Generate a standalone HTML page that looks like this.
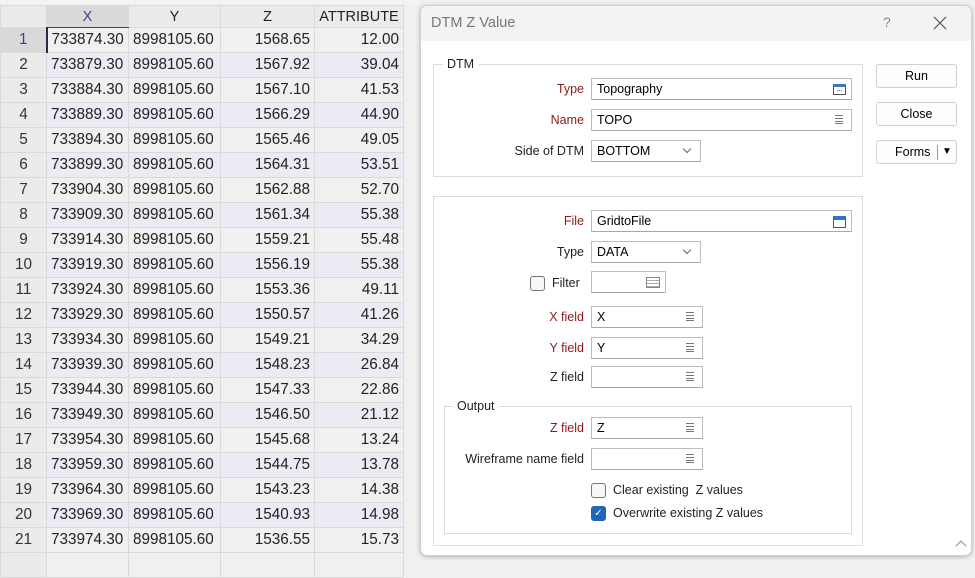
<!DOCTYPE html>
<html><head><meta charset="utf-8"><style>
*{box-sizing:border-box;margin:0;padding:0}
body{width:975px;height:559px;position:relative;background:#f0f0f0;font-family:"Liberation Sans",sans-serif;overflow:hidden}
.a{position:absolute}
table{position:absolute;left:0;top:5px;border-collapse:collapse;font-size:15.3px;color:#222}
td{height:25px;border:1px solid #dadada;padding:0 4px;white-space:nowrap}
td.h{background:#ebebeb;text-align:center;color:#333}
tr.hd td{height:22px;background:#ebebeb;text-align:center;font-size:14.5px}
tr.e td:not(.h){background:#ebebf3}
td.r{text-align:right}
.dlg{left:420px;top:5px;width:552px;height:551px;background:#fff;border:1px solid #cfcfcf;border-radius:7px;box-shadow:0 1px 4px rgba(0,0,0,.25);overflow:hidden}
.tb{left:0;top:0;width:100%;height:35px;background:#f3f3f3}
.d{font-size:12.5px;color:#222}
.lb{font-size:12.5px;text-align:right;color:#222}
.red{color:#8b1a1a}
.in{background:#fff;border:1px solid #bdbdbd;border-bottom-color:#a8a8a8;font-size:12.5px;padding:3px 5px;height:22px}
.grp{border:1px solid #dcdcdc}
.btn{background:#fdfdfd;border:1px solid #cfcfcf;border-radius:3px;font-size:12.5px;text-align:center;line-height:22px;height:24px}
.ham{position:absolute;right:8px;top:5px;width:8px;height:9px;border-top:1px solid #777;border-bottom:1px solid #777}
.ham:before,.ham:after{content:"";position:absolute;left:0;width:8px;border-top:1px solid #777}
.ham:before{top:2px}.ham:after{top:5px}
.cb{width:15px;height:15px;border:1px solid #777;border-radius:3px;background:#f7f7f7}
.chev{position:absolute;right:10px;top:5px;width:6px;height:6px;border-right:1px solid #666;border-bottom:1px solid #666;transform:rotate(45deg)}
</style></head><body>
<div class="a" style="left:0;top:0;width:420px;height:5px;background:#f3f3f3"></div>
<div class="a" style="left:403px;top:5px;width:17px;height:554px;background:#f0f0f0;border-left:1px solid #e0e0e0"></div>
<table>
<colgroup><col style="width:46px"><col style="width:82px"><col style="width:92px"><col style="width:94px"><col style="width:89px"></colgroup>
<tr class="hd"><td class="h"></td><td style="background:#d9d9d9;color:#4a3d7a;border-bottom:1px solid #4a3d7a">X</td><td>Y</td><td>Z</td><td>ATTRIBUTE</td></tr>
<tr><td class="h" style="background:#d9d9d9;color:#4a3d7a">1</td><td style="border-left:2px solid #2d2750">733874.30</td><td>8998105.60</td><td class="r">1568.65</td><td class="r">12.00</td></tr>
<tr class="e"><td class="h">2</td><td>733879.30</td><td>8998105.60</td><td class="r">1567.92</td><td class="r">39.04</td></tr>
<tr><td class="h">3</td><td>733884.30</td><td>8998105.60</td><td class="r">1567.10</td><td class="r">41.53</td></tr>
<tr class="e"><td class="h">4</td><td>733889.30</td><td>8998105.60</td><td class="r">1566.29</td><td class="r">44.90</td></tr>
<tr><td class="h">5</td><td>733894.30</td><td>8998105.60</td><td class="r">1565.46</td><td class="r">49.05</td></tr>
<tr class="e"><td class="h">6</td><td>733899.30</td><td>8998105.60</td><td class="r">1564.31</td><td class="r">53.51</td></tr>
<tr><td class="h">7</td><td>733904.30</td><td>8998105.60</td><td class="r">1562.88</td><td class="r">52.70</td></tr>
<tr class="e"><td class="h">8</td><td>733909.30</td><td>8998105.60</td><td class="r">1561.34</td><td class="r">55.38</td></tr>
<tr><td class="h">9</td><td>733914.30</td><td>8998105.60</td><td class="r">1559.21</td><td class="r">55.48</td></tr>
<tr class="e"><td class="h">10</td><td>733919.30</td><td>8998105.60</td><td class="r">1556.19</td><td class="r">55.38</td></tr>
<tr><td class="h">11</td><td>733924.30</td><td>8998105.60</td><td class="r">1553.36</td><td class="r">49.11</td></tr>
<tr class="e"><td class="h">12</td><td>733929.30</td><td>8998105.60</td><td class="r">1550.57</td><td class="r">41.26</td></tr>
<tr><td class="h">13</td><td>733934.30</td><td>8998105.60</td><td class="r">1549.21</td><td class="r">34.29</td></tr>
<tr class="e"><td class="h">14</td><td>733939.30</td><td>8998105.60</td><td class="r">1548.23</td><td class="r">26.84</td></tr>
<tr><td class="h">15</td><td>733944.30</td><td>8998105.60</td><td class="r">1547.33</td><td class="r">22.86</td></tr>
<tr class="e"><td class="h">16</td><td>733949.30</td><td>8998105.60</td><td class="r">1546.50</td><td class="r">21.12</td></tr>
<tr><td class="h">17</td><td>733954.30</td><td>8998105.60</td><td class="r">1545.68</td><td class="r">13.24</td></tr>
<tr class="e"><td class="h">18</td><td>733959.30</td><td>8998105.60</td><td class="r">1544.75</td><td class="r">13.78</td></tr>
<tr><td class="h">19</td><td>733964.30</td><td>8998105.60</td><td class="r">1543.23</td><td class="r">14.38</td></tr>
<tr class="e"><td class="h">20</td><td>733969.30</td><td>8998105.60</td><td class="r">1540.93</td><td class="r">14.98</td></tr>
<tr><td class="h">21</td><td>733974.30</td><td>8998105.60</td><td class="r">1536.55</td><td class="r">15.73</td></tr>
<tr><td class="h"></td><td></td><td></td><td></td><td></td></tr>
</table>

<div class="a dlg">
 <div class="a tb"></div>
 <div class="a" style="left:10px;top:9px;font-size:14.5px;color:#777">DTM Z Value</div>
 <div class="a" style="left:462px;top:8px;font-size:14px;color:#888">?</div>
 <svg class="a" style="left:512px;top:10px" width="14" height="14"><path d="M1 1L13 13M13 1L1 13" stroke="#555" stroke-width="1.2" fill="none"/></svg>

 <div class="a grp" style="left:12px;top:58px;width:430px;height:113px"></div>
 <div class="a d" style="left:22px;top:51px;background:#fff;padding:0 4px">DTM</div>
 <div class="a lb red" style="left:60px;width:103px;top:76px">Type</div>
 <div class="a in" style="left:170px;top:72px;width:261px">Topography
  <div class="a" style="right:5px;top:5px;width:13px;height:11px;border:1px solid #555;border-top:3px solid #3a78c0;font-size:8px;line-height:3px;text-align:center;color:#333">...</div></div>
 <div class="a lb red" style="left:60px;width:103px;top:107px">Name</div>
 <div class="a in" style="left:170px;top:103px;width:261px">TOPO<span class="ham"></span></div>
 <div class="a lb" style="left:60px;width:103px;top:138px">Side of DTM</div>
 <div class="a in" style="left:170px;top:134px;width:110px">BOTTOM<span class="chev"></span></div>

 <div class="a btn" style="left:455px;top:58px;width:81px">Run</div>
 <div class="a btn" style="left:455px;top:96px;width:81px">Close</div>
 <div class="a btn" style="left:455px;top:134px;width:81px;text-align:left;padding-left:18px">Forms<span class="a" style="left:60px;top:4px;height:15px;border-left:1px solid #999"></span><span class="a" style="left:65px;top:0;font-size:10px">▼</span></div>

 <div class="a grp" style="left:12px;top:190px;width:430px;height:350px"></div>
 <div class="a lb red" style="left:60px;width:103px;top:208px">File</div>
 <div class="a in" style="left:170px;top:204px;width:261px">GridtoFile
  <div class="a" style="right:5px;top:5px;width:13px;height:12px;border:1px solid #555;border-top:4px solid #2a78c8"></div></div>
 <div class="a lb" style="left:60px;width:103px;top:239px">Type</div>
 <div class="a in" style="left:170px;top:235px;width:110px">DATA<span class="chev"></span></div>
 <div class="a cb" style="left:109px;top:270px"></div>
 <div class="a d" style="left:131px;top:270px">Filter</div>
 <div class="a in" style="left:170px;top:265px;width:75px"><div class="a" style="right:5px;top:5px;width:14px;height:11px;border:1px solid #888;background:repeating-linear-gradient(#fff 0 2px,#aaa 2px 3px)"></div></div>
 <div class="a lb red" style="left:60px;width:103px;top:304px">X field</div>
 <div class="a in" style="left:170px;top:300px;width:112px">X<span class="ham"></span></div>
 <div class="a lb red" style="left:60px;width:103px;top:335px">Y field</div>
 <div class="a in" style="left:170px;top:331px;width:112px">Y<span class="ham"></span></div>
 <div class="a lb" style="left:60px;width:103px;top:364px">Z field</div>
 <div class="a in" style="left:170px;top:360px;width:112px"><span class="ham"></span></div>

 <div class="a grp" style="left:23px;top:400px;width:408px;height:128px"></div>
 <div class="a d" style="left:32px;top:393px;background:#fff;padding:0 4px">Output</div>
 <div class="a lb red" style="left:20px;width:143px;top:415px">Z field</div>
 <div class="a in" style="left:170px;top:411px;width:112px">Z<span class="ham"></span></div>
 <div class="a lb" style="left:20px;width:143px;top:446px">Wireframe name field</div>
 <div class="a in" style="left:170px;top:442px;width:112px"><span class="ham"></span></div>
 <div class="a cb" style="left:170px;top:477px"></div>
 <div class="a d" style="left:192px;top:477px">Clear existing&nbsp; Z values</div>
 <div class="a cb" style="left:170px;top:500px;background:#1f66b8;border-color:#1f66b8;color:#fff;font-size:10px;text-align:center;line-height:13px">✓</div>
 <div class="a d" style="left:192px;top:500px">Overwrite existing Z values</div>
 <div class="a" style="left:536px;top:536px;width:8px;height:8px;border-left:1px solid #888;border-top:1px solid #888;transform:rotate(45deg)"></div>
</div>
</body></html>
